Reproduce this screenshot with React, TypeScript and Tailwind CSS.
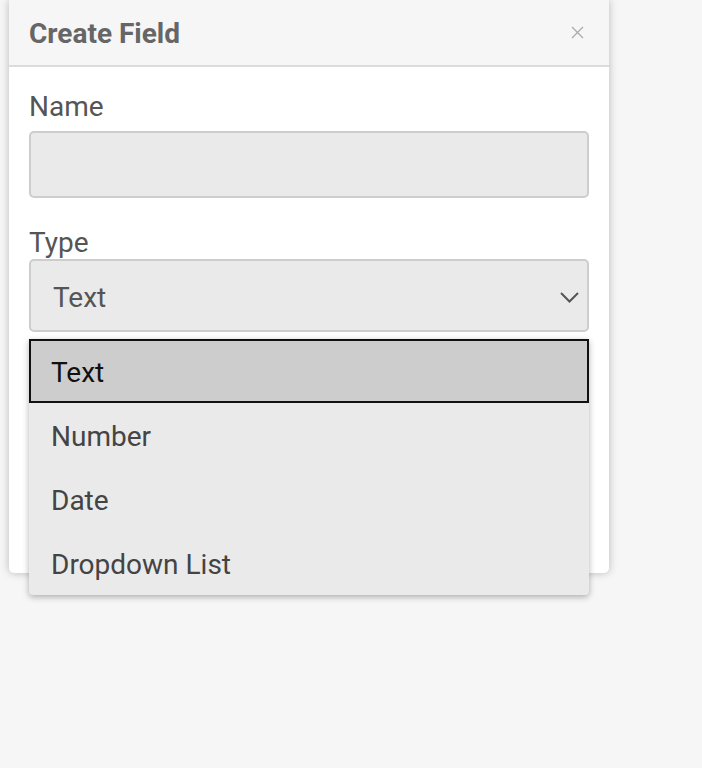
const OPTIONS = ['Text', 'Number', 'Date', 'Dropdown List'];

export default function App() {
  return (
    <div className="min-h-[768px] w-full bg-[#f6f6f6] font-['Roboto',sans-serif]">
      <div className="relative ml-[9px] w-[600px]">
        {/* Modal */}
        <div className="rounded-b-[5px] bg-white shadow-[0_0_8px_rgba(0,0,0,0.25)]">
          <div className="flex h-[67px] items-center justify-between border-b-2 border-[#dcdcdc] bg-[#f6f6f6] pl-5 pr-5 pt-[3px]">
            <h2 className="text-[28px] font-bold text-[#666]">Create Field</h2>
            <button className="-mt-[4px] flex h-6 w-6 items-center justify-center text-[#aaa]">
              <svg width="13" height="13" viewBox="0 0 13 13" fill="none" stroke="currentColor" strokeWidth="1.3">
                <path d="M1 1L12 12M12 1L1 12" />
              </svg>
            </button>
          </div>

          <div className="h-[506px] px-5 pt-[23px]">
            <label className="block text-[28px] leading-[34px] text-[#555]">Name</label>
            <div className="mt-[7px] h-[67px] rounded-[5px] border-2 border-[#cdcdcd] bg-[#eaeaea]" />

            <label className="mt-[28px] block text-[28px] leading-[33px] text-[#555]">Type</label>
            <div className="flex h-[73px] items-center justify-between rounded-[5px] border-2 border-[#cdcdcd] bg-[#eaeaea] pl-[22px] pr-[8px] pt-[4px]">
              <span className="text-[28px] text-[#555]">Text</span>
              <svg width="19" height="11" viewBox="0 0 19 11" fill="none" stroke="#555" strokeWidth="2">
                <path d="M1 1L9.5 9.5L18 1" />
              </svg>
            </div>
          </div>
        </div>

        {/* Open dropdown */}
        <ul className="absolute left-5 top-[339px] w-[560px] rounded-b-[4px] bg-[#eaeaea] shadow-[0_2px_6px_rgba(0,0,0,0.3)]">
          {OPTIONS.map((opt, i) => (
            <li
              key={opt}
              className={
                i === 0
                  ? 'flex h-[64px] items-center border-2 border-[#111] bg-[#cdcdcd] pl-[20px] pt-[3px] text-[28px] text-[#111]'
                  : 'flex h-[64px] items-center pl-[22px] pt-[3px] text-[28px] text-[#444]'
              }
            >
              {opt}
            </li>
          ))}
        </ul>
      </div>
    </div>
  );
}
